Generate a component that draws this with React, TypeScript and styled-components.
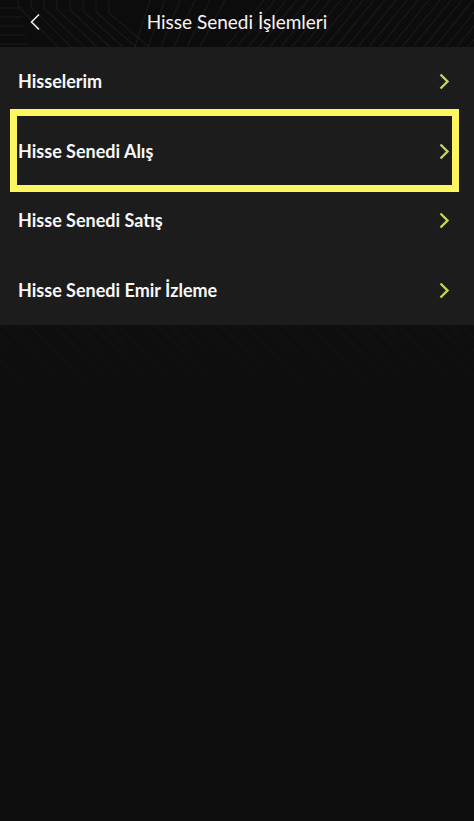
import React from 'react';
import styled, { createGlobalStyle } from 'styled-components';

type RowProps = {
  $highlighted?: boolean
};

const items = [
  'Hisselerim',
  'Hisse Senedi Alış',
  'Hisse Senedi Satış',
  'Hisse Senedi Emir İzleme'
];

const range = (count: number) => Array.from({ length: count }, (_, i) => i);

// faint line work behind the header, it changes direction from left to right
const HeaderPattern = () => (
  <PatternSvg width="474" height="47" viewBox="0 0 474 47">
    <g stroke="#fff" strokeOpacity="0.055" strokeWidth="1.2" fill="none">
      {range(5).map((i) => (
        <path key={`h${i}`} d={`M0 ${8 + i * 9}H${20 + i * 2}`} />
      ))}
      {range(8).map((i) => (
        <path key={`d${i}`} d={`M${18 + i * 13} 0V${6 + i}L${58 + i * 13} 47`} />
      ))}
      {range(6).map((i) => (
        <path key={`f${i}`} d={`M${135 + i * 13} 47L${150 + i * 15} 0`} />
      ))}
      {range(26).map((i) => (
        <path key={`r${i}`} d={`M${226 + i * 11} 47L${264 + i * 11} 0`} />
      ))}
    </g>
  </PatternSvg>
);

const App = () => {
  return (
    <Screen>
      <GlobalStyle />
      <Header>
        <HeaderPattern />
        <BackButton>
          <svg width="12" height="18" viewBox="0 0 12 18" fill="none">
            <path d="M10 1.5 2.5 9l7.5 7.5" stroke="#f4f4f4" strokeWidth="1.5" />
          </svg>
        </BackButton>
        <Title>Hisse Senedi İşlemleri</Title>
      </Header>
      <List>
        {items.map((item, index) => (
          <Row key={item} $highlighted={index === 1}>
            <RowLabel>{item}</RowLabel>
            <svg width="11" height="17" viewBox="0 0 11 17" fill="none">
              <path d="M1.5 1.5 8.5 8.5l-7 7" stroke="#c3d65c" strokeWidth="2.4" />
            </svg>
          </Row>
        ))}
      </List>
      <Backdrop />
    </Screen>
  );
};

export default App;

const GlobalStyle = createGlobalStyle`
  html, body {
    margin: 0;
    padding: 0;
    background: #0e0e0e;
  }
`;

const Screen = styled.div`
  width: 474px;
  height: 821px;
  display: flex;
  flex-direction: column;
  overflow: hidden;
  background: #0e0e0e;
  font-family: Lato, "Noto Sans", sans-serif;
`;

const Header = styled.div`
  position: relative;
  height: 47px;
  flex-shrink: 0;
  display: flex;
  align-items: center;
  justify-content: center;
  padding-bottom: 4px;
  box-sizing: border-box;
  background-color: #0c0c0c;
`;

const PatternSvg = styled.svg`
  position: absolute;
  left: 0;
  top: 0;
`;

const BackButton = styled.div`
  position: absolute;
  left: 29px;
  top: 13px;
  line-height: 0;
`;

const Title = styled.div`
  position: relative;
  color: #f6f6f6;
  font-size: 19px;
  font-weight: 400;
`;

const List = styled.div`
  height: 278px;
  flex-shrink: 0;
  display: grid;
  grid-template-rows: repeat(4, 1fr);
  background: #1c1c1c;
`;

const Row = styled.div<RowProps>`
  position: relative;
  display: flex;
  align-items: center;
  justify-content: space-between;
  padding: 0 24px 0 18px;

  &::after {
    content: ${(props: RowProps) => (props.$highlighted ? '""' : 'none')};
    position: absolute;
    left: 10px;
    right: 15px;
    top: -8px;
    bottom: -6px;
    border: 7px solid #fdf65f;
  }
`;

const RowLabel = styled.div`
  color: #f8f8f8;
  font-size: 18px;
  font-weight: 700;
  margin-bottom: 1px;
`;

const Backdrop = styled.div`
  height: 100px;
  flex-shrink: 0;
  background-image:
    linear-gradient(to bottom, rgba(14, 14, 14, 0.5), #0e0e0e),
    repeating-linear-gradient(45deg, rgba(255, 255, 255, 0.025) 0 2px, transparent 2px 9px);
`;
